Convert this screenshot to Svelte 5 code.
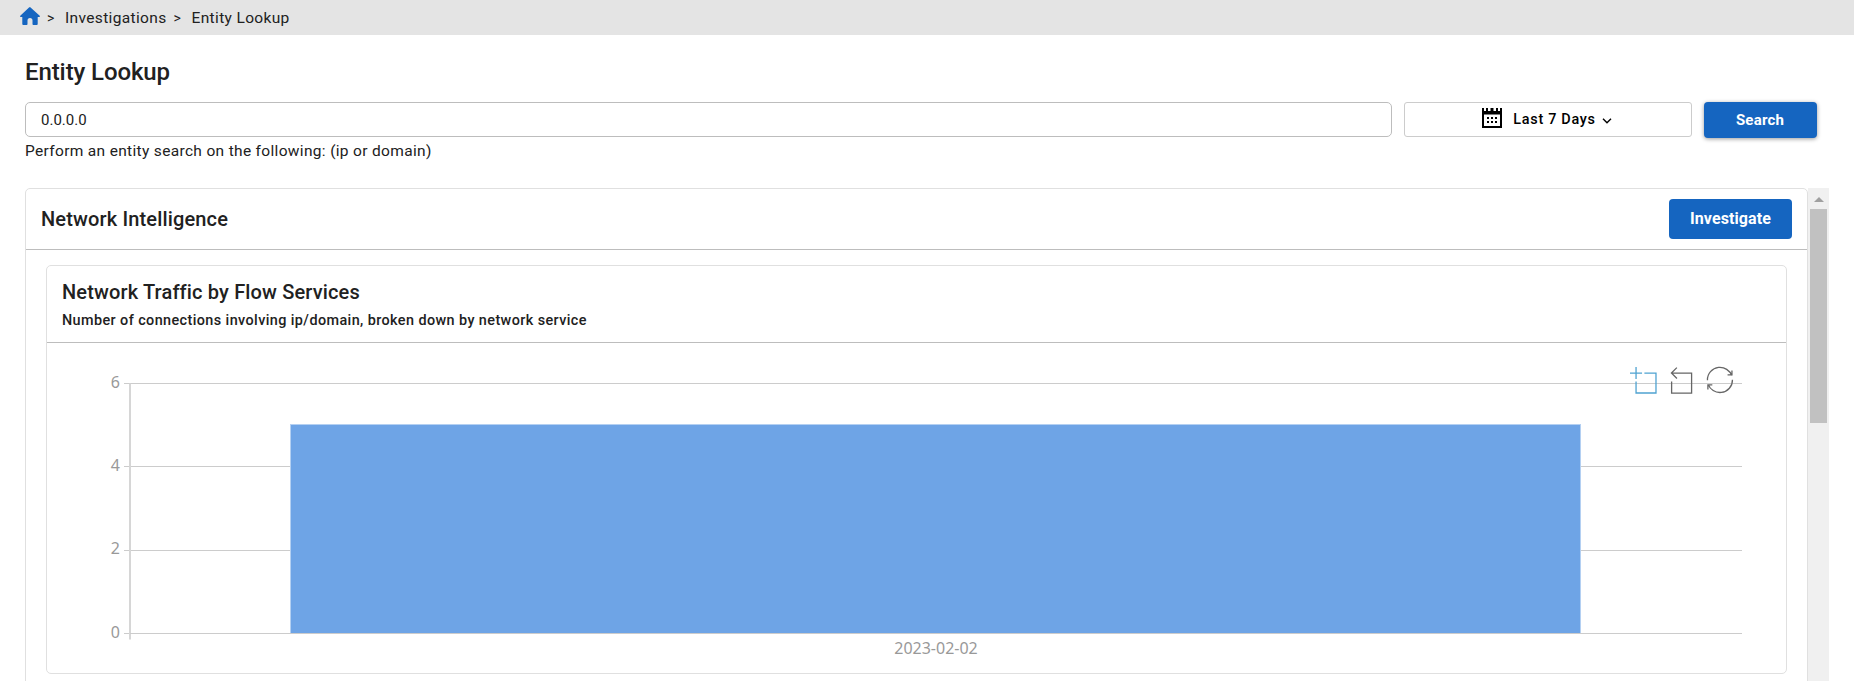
<script lang="ts">
	const crumbs = ['Investigations', 'Entity Lookup']

	// chart geometry, in svg units (1 unit = 1px)
	const left = 83
	const right = 1695
	const base = 290.5
	const step = 83.33
	const ticks = [0, 2, 4, 6]
	const data = [{ label: '2023-02-02', value: 5 }]

	const y = (value: number) => base - (value / 2) * step
	// keeps 1px strokes sharp
	const snap = (n: number) => Math.floor(n) + 0.5
	const band = (right - left) / data.length

	let query = $state('0.0.0.0')
</script>

<nav class="breadcrumb">
	<svg class="home" viewBox="0 0 20 18" width="20" height="18">
		<path d="M10 0 L20 9 Q20 10 19.2 10 H17.7 V17 Q17.7 18 16.7 18 H13.3 Q12.5 18 12.5 17 V13.5 A2.5 2.5 0 0 0 7.5 13.5 V17 Q7.5 18 6.7 18 H3.2 Q2.3 18 2.3 17 V10 H.8 Q0 10 0 9 L9 .6 Q10 -.4 11 .6 Z" />
	</svg>
	{#each crumbs as crumb}
		<span class="sep">&gt;</span>
		<span class="crumb">{crumb}</span>
	{/each}
</nav>

<main>
	<h1>Entity Lookup</h1>
	<div class="search">
		<input type="text" bind:value={query} />
		<button class="range">
			<svg class="calendar" viewBox="0 0 20 20" width="20" height="20">
				<path fill-rule="evenodd" d="M0 0H2V3H4V0H6V3H8.5V0H11.5V3H14V0H16V3H18V0H20V20H0Z M2 6.5H18V18H2Z" />
				<path d="M5 9h2v2H5zM9 9h2v2H9zM13 9h2v2H13zM5 13h2v2H5zM9 13h2v2H9zM13 13h2v2H13z" />
			</svg>
			<span>Last 7 Days</span>
			<svg class="chevron" viewBox="0 0 10 6" width="10" height="6">
				<path d="M1 .8L5 4.8L9 .8" />
			</svg>
		</button>
		<button class="primary submit">Search</button>
	</div>
	<p class="hint">Perform an entity search on the following: (ip or domain)</p>

	<div class="results">
		<section class="panel">
			<header>
				<h2>Network Intelligence</h2>
				<button class="primary investigate">Investigate</button>
			</header>

			<article class="card">
				<div class="card-header">
					<h3>Network Traffic by Flow Services</h3>
					<p>Number of connections involving ip/domain, broken down by network service</p>
				</div>
				<svg class="chart" viewBox="0 0 1740 330" width="1740" height="330">
					{#each ticks as tick}
						<line class="grid" x1={left - 6} x2={right} y1={snap(y(tick))} y2={snap(y(tick))} />
						<text class="value" x={left - 10} y={y(tick) + 4}>{tick}</text>
					{/each}
					<line class="axis" x1={left} x2={left} y1={y(6)} y2={base + 6} />
					{#each data as item, i}
						<rect
							class="bar"
							x={snap(left + band * (i + 0.1)) - 1}
							y={snap(y(item.value)) - 1}
							width={snap(band * 0.8) + 0.5}
							height={base - snap(y(item.value)) + 1}
						/>
						<text class="label" x={left + band * (i + 0.5)} y="311">{item.label}</text>
					{/each}
					<line class="grid" x1={left} x2={right} y1={base} y2={base} />
					<g class="tools">
						<path class="active" transform="translate(1583 24) scale(.448)" d="M0,13.5h26.9 M13.5,26.9V0 M32.1,13.5H58V58H13.5V32.1" />
						<path transform="translate(1620 24) scale(.448)" d="M22,1.4L9.9,13.5l12.3,12.3 M10.3,13.5H54.9v44.6H10.3v-26" />
						<path transform="translate(1659.5 23.5) scale(.448)" d="M47,18.9h9.8V8.7 M56.3,20.1C52.1,9,40.5,0.6,26.8,2.1C12.6,3.7,1.6,16.2,2.1,30.6 M13,41.1H3.1v10.2 M3.7,39.9c4.2,11.1,15.8,19.5,29.5,18c14.2-1.6,25.2-14.1,24.7-28.5" />
					</g>
				</svg>
			</article>
		</section>

		<div class="scrollbar">
			<svg viewBox="0 0 10 5" width="10" height="5"><path d="M0 5L5 0L10 5Z" /></svg>
			<div class="thumb"></div>
		</div>
	</div>
</main>

<style>
	:global(body) {
		overflow: hidden;
		background: #fff;
	}

	:global(#app) {
		height: 681px;
		overflow: hidden;
		font-family: Roboto, sans-serif;
		font-size: 15px;
		color: #212121;
	}

	h1,
	h2,
	h3,
	p {
		margin: 0;
		font-weight: 500;
	}

	button,
	input {
		box-sizing: border-box;
		font: inherit;
		padding: 0;
		border: 0;
	}

	.breadcrumb {
		display: flex;
		align-items: center;
		height: 35px;
		padding-left: 20px;
		background: #e4e4e4;
		font-size: 15.5px;
		letter-spacing: 0.35px;
	}

	.home {
		fill: #1565c0;
		margin: 0 7px 3px 0;
	}

	.sep {
		width: 18px;
		font-size: 14px;
	}

	.crumb {
		margin-right: 7px;
	}

	main {
		padding: 0 25px;
	}

	h1 {
		padding-top: 21px;
		height: 46px;
		font-size: 24px;
		line-height: 32px;
		letter-spacing: -0.1px;
	}

	.search {
		display: flex;
		gap: 12px;
		width: 1792px;
		height: 36px;
	}

	input {
		flex: 1;
		height: 35px;
		padding: 0 15px;
		border: 1px solid #bdbdbd;
		border-radius: 5px;
		color: #212121;
		outline: none;
	}

	.range {
		display: flex;
		justify-content: center;
		width: 288px;
		height: 35px;
		padding-right: 2px;
		border: 1px solid #ccc;
		border-radius: 3px;
		background: #fff;
		color: #000;
		font-size: 14.4px;
		font-weight: 500;
		line-height: 33px;
		letter-spacing: 0.7px;
	}

	.calendar {
		margin: 5px 11px 0 0;
	}

	.chevron {
		margin: 15px 0 0 6px;
		fill: none;
		stroke: #000;
		stroke-width: 1.4;
	}

	.primary {
		background: #1565c0;
		border-radius: 4px;
		color: #fff;
		font-weight: 700;
		font-size: 15px;
		letter-spacing: 0.2px;
	}

	.submit {
		width: 113px;
		padding-right: 1px;
		box-shadow: 0 1px 4px #0006;
	}

	.hint {
		height: 50px;
		font-weight: 400;
		font-size: 15.5px;
		line-height: 26px;
		letter-spacing: 0.33px;
	}

	.results {
		display: flex;
		width: 1804px;
		height: 493px;
	}

	.panel {
		box-sizing: border-box;
		width: 1783px;
		height: 600px;
		border: 1px solid #e0e0e0;
		border-radius: 5px 5px 0 0;
	}

	header {
		display: flex;
		align-items: center;
		justify-content: space-between;
		height: 60px;
		padding: 0 15px;
		border-bottom: 1px solid #bdbdbd;
	}

	h2,
	h3 {
		font-size: 20px;
		line-height: 26px;
		letter-spacing: 0.15px;
	}

	.investigate {
		width: 123px;
		height: 40px;
		padding-bottom: 2px;
		font-size: 16px;
		letter-spacing: 0.1px;
	}

	.card {
		box-sizing: border-box;
		width: 1741px;
		height: 409px;
		margin: 15px 0 0 20px;
		border: 1px solid #e0e0e0;
		border-radius: 5px;
	}

	.card-header {
		box-sizing: border-box;
		height: 77px;
		padding: 13px 15px 0;
		border-bottom: 1px solid #bdbdbd;
	}

	.card-header p {
		margin-top: 6px;
		font-size: 14.4px;
		line-height: 20px;
		letter-spacing: 0.41px;
	}

	.chart {
		display: block;
	}

	.chart text {
		font-family: 'Noto Sans', sans-serif;
		fill: #999;
	}

	.value {
		font-size: 16px;
		text-anchor: end;
	}

	.label {
		font-size: 16px;
		text-anchor: middle;
	}

	.grid {
		stroke: #ccc;
		stroke-width: 1.2;
	}

	.axis {
		stroke: #d6d6d6;
		stroke-width: 2;
	}

	.bar {
		fill: #6ea4e6;
		stroke: #b4d0f2;
		stroke-width: 1;
	}

	.tools path {
		fill: none;
		stroke: #666;
		stroke-width: 1.3;
		vector-effect: non-scaling-stroke;
	}

	.tools .active {
		stroke: #4fa3d1;
	}

	.scrollbar {
		display: flex;
		flex-direction: column;
		align-items: center;
		width: 21px;
		background: #f0f0f0;
	}

	.scrollbar svg {
		margin: 9px 0 7px;
		fill: #a0a0a0;
	}

	.thumb {
		width: 17px;
		height: 214px;
		background: #c1c1c1;
	}
</style>
